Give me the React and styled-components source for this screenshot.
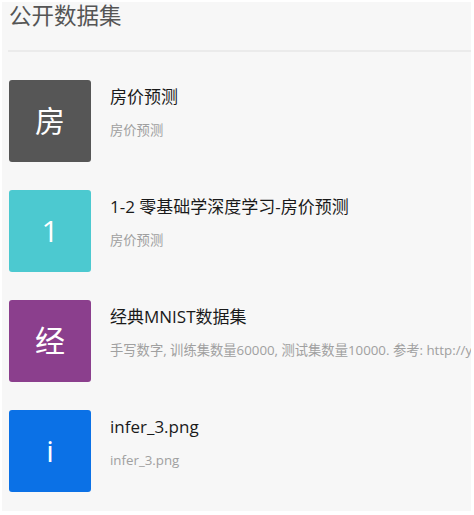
import React from 'react';
import styled, { createGlobalStyle } from 'styled-components';

const GlobalStyle = createGlobalStyle`
  html, body {
    margin: 0;
    padding: 0;
    background: #ffffff;
  }
  body {
    font-family: "Open Sans", "Noto Sans CJK SC", sans-serif;
  }
`;

const Frame = styled.div`
  width: 474px;
  height: 515px;
  padding: 2px 3px 4px 2px;
  box-sizing: border-box;
  background: #ffffff;
  overflow: hidden;
`;

const Panel = styled.div`
  height: 100%;
  background: #f7f7f7;
  overflow: hidden;
`;

const Header = styled.div`
  margin-left: 6px;
  height: 48px;
  border-bottom: 2px solid #ebebeb;
`;

const HeaderTitle = styled.h2`
  margin: 0;
  padding-left: 1px;
  font-family: "Noto Sans CJK SC", sans-serif;
  font-size: 22.5px;
  font-weight: 400;
  line-height: 24px;
  color: #555555;
`;

const List = styled.ul`
  list-style: none;
  margin: 0;
  padding: 28px 0 0 7px;
`;

const Item = styled.li`
  display: flex;
  align-items: flex-start;
  gap: 19px;
  height: 82px;
  margin-bottom: 28px;
  white-space: nowrap;
  overflow: hidden;
`;

const Avatar = styled.div`
  flex: 0 0 82px;
  height: 82px;
  border-radius: 3px;
  background: ${p => p.color};
  color: #ffffff;
  display: flex;
  align-items: center;
  justify-content: center;
  font-family: "Open Sans", "Noto Sans CJK SC", sans-serif;
  font-size: 30px;
  line-height: 1;
`;

const Text = styled.div`
  padding-top: 5px;
  min-width: 0;
`;

const Title = styled.div`
  font-family: "Open Sans", "Noto Sans CJK SC", sans-serif;
  font-size: 17px;
  line-height: 24px;
  color: #1a1a1a;
`;

const Desc = styled.div`
  margin-top: 11px;
  font-family: "Open Sans", "Noto Sans CJK SC", sans-serif;
  font-size: 13.3px;
  line-height: 20px;
  color: #a0a0a0;
`;

const datasets = [
  { letter: '房', color: '#565656', title: '房价预测', desc: '房价预测' },
  { letter: '1', color: '#4cc9d0', title: '1-2 零基础学深度学习-房价预测', desc: '房价预测' },
  {
    letter: '经',
    color: '#8b3f8d',
    title: '经典MNIST数据集',
    desc: '手写数字, 训练集数量60000, 测试集数量10000. 参考: http://yann.lecun.com/exdb/mnist/',
  },
  { letter: 'i', color: '#0b71e6', title: 'infer_3.png', desc: 'infer_3.png' },
];

const App = () => {
  return (
    <Frame>
      <GlobalStyle />
      <Panel>
        <Header>
          <HeaderTitle>公开数据集</HeaderTitle>
        </Header>
        <List>
          {datasets.map(d => (
            <Item key={d.title}>
              <Avatar color={d.color}>{d.letter}</Avatar>
              <Text>
                <Title>{d.title}</Title>
                <Desc>{d.desc}</Desc>
              </Text>
            </Item>
          ))}
        </List>
      </Panel>
    </Frame>
  );
};

export default App;
